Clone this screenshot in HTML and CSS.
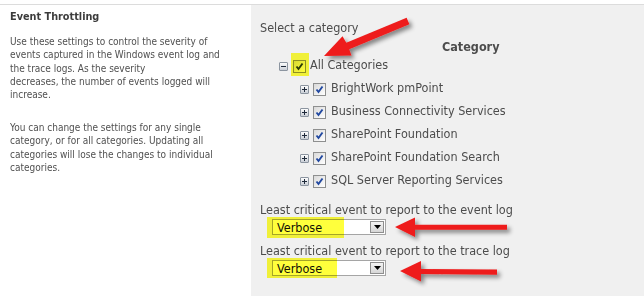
FILE: index.html
```html
<!DOCTYPE html>
<html lang="en">
<head>
  <meta charset="UTF-8" />
  <meta name="viewport" content="width=device-width, initial-scale=1.0" />
  <title>Event Throttling</title>
  <link rel="stylesheet" href="styles.css">
</head>
<body>
  <div class="settings">
    <div class="desc">
      <h3>Event Throttling</h3>
      <p>Use these settings to control the severity of events captured in the Windows event log and the trace logs. As the severity<br>decreases, the number of events logged will increase.</p>
      <p>You can change the settings for any single category, or for all categories. Updating all categories will lose the changes to individual categories.</p>
    </div>

    <div class="form">
      <div class="label">Select a category</div>
      <div class="tree-head">Category</div>

      <div class="row root">
        <span class="toggle minus"></span>
        <span class="cb-wrap">
          <span class="cb"><svg viewBox="0 0 11 11"><polyline points="2.5,5.5 4.5,8 8.5,2.5" /></svg></span>
          <span class="hl hl-cb"></span>
        </span>
        <span class="name">All Categories</span>
      </div>
      <div class="row child">
        <span class="toggle plus"></span>
        <span class="cb"><svg viewBox="0 0 11 11"><polyline points="2.5,5.5 4.5,8 8.5,2.5" /></svg></span>
        <span class="name">BrightWork pmPoint</span>
      </div>
      <div class="row child">
        <span class="toggle plus"></span>
        <span class="cb"><svg viewBox="0 0 11 11"><polyline points="2.5,5.5 4.5,8 8.5,2.5" /></svg></span>
        <span class="name">Business Connectivity Services</span>
      </div>
      <div class="row child">
        <span class="toggle plus"></span>
        <span class="cb"><svg viewBox="0 0 11 11"><polyline points="2.5,5.5 4.5,8 8.5,2.5" /></svg></span>
        <span class="name">SharePoint Foundation</span>
      </div>
      <div class="row child">
        <span class="toggle plus"></span>
        <span class="cb"><svg viewBox="0 0 11 11"><polyline points="2.5,5.5 4.5,8 8.5,2.5" /></svg></span>
        <span class="name">SharePoint Foundation Search</span>
      </div>
      <div class="row child">
        <span class="toggle plus"></span>
        <span class="cb"><svg viewBox="0 0 11 11"><polyline points="2.5,5.5 4.5,8 8.5,2.5" /></svg></span>
        <span class="name">SQL Server Reporting Services</span>
      </div>

      <div class="label field-label">Least critical event to report to the event log</div>
      <div class="select">
        <span class="value">Verbose</span>
        <span class="drop"><svg viewBox="0 0 7 4"><polygon points="0,0 7,0 3.5,4" /></svg></span>
        <span class="hl hl-sel1"></span>
      </div>

      <div class="label field-label second">Least critical event to report to the trace log</div>
      <div class="select">
        <span class="value">Verbose</span>
        <span class="drop"><svg viewBox="0 0 7 4"><polygon points="0,0 7,0 3.5,4" /></svg></span>
        <span class="hl hl-sel2"></span>
      </div>
    </div>
  </div>

  <!-- callout arrows drawn over the form -->
  <svg class="arrows" width="644" height="296" viewBox="0 0 644 296">
    <defs>
      <filter id="shadow" x="-20%" y="-50%" width="140%" height="200%">
        <feDropShadow dx="3" dy="3" stdDeviation="2" flood-color="#000" flood-opacity="0.45" />
      </filter>
    </defs>
    <g fill="#ee1b1b" filter="url(#shadow)">
      <polygon points="324,56 351.5,55.5 349.2,49.2 409.4,24.2 406.6,17.8 346.3,42.8 342.5,36.3" />
      <polygon points="395,227 415,217.5 415,224.8 507,224.8 507,229.8 415,229.8 415,237" />
      <polygon points="400,271 421,261 421,269 497,269.5 497,274.8 421,274 421,281.5" />
    </g>
  </svg>
</body>
</html>
```

FILE: styles.css
```css
body {
  margin: 0;
  padding-top: 4px;
  background: #fff;
  font-family: "DejaVu Sans Condensed", "DejaVu Sans", sans-serif;
  color: #4c4c4c;
}
.settings {
  display: flex;
  border-top: 1px solid #dcdcdc;
  min-height: 291px;
}
.desc {
  width: 215px;
  padding: 5px 26px 0 10px;
  font-size: 10px;
  line-height: 13.3px;
  color: #505050;
}
.desc h3 {
  margin: 0 0 11px;
  font-size: 10.8px;
  line-height: 14px;
  color: #3c3c3c;
}
.desc p {
  margin: 0 0 19.5px;
}
.form {
  flex: 1;
  background: #f0f0f0;
  padding: 15px 9px 0;
  font-size: 12.5px;
  line-height: 15px;
}
.tree-head {
  margin: 4px 0 0 182px;
  font-weight: bold;
}
.row {
  display: flex;
  align-items: center;
  height: 23px;
}
.root {
  padding-left: 19px;
}
.child {
  padding-left: 40px;
}
.name {
  padding-bottom: 3px;
}
.toggle {
  position: relative;
  width: 7px;
  height: 7px;
  margin-top: 2px;
  border: 1px solid #8c95a0;
  border-radius: 1px;
  background: linear-gradient(#fdfdfd, #c9ced6);
}
.toggle::before,
.plus::after {
  content: "";
  position: absolute;
  background: #1f2a3a;
}
.toggle::before {
  left: 1px;
  top: 3px;
  width: 5px;
  height: 1px;
}
.plus::after {
  left: 3px;
  top: 1px;
  width: 1px;
  height: 5px;
}
.root .toggle {
  margin-right: 5px;
}
.child .toggle {
  margin-right: 4px;
}
.cb-wrap {
  position: relative;
  display: flex;
  margin: 2px 4px 0 0;
}
.cb {
  width: 11px;
  height: 11px;
  border: 1px solid #8e8f8f;
  background: linear-gradient(135deg, #d9d9d9, #ffffff);
  display: flex;
}
.child .cb {
  margin: 2px 5px 0 0;
}
.cb svg {
  width: 11px;
  height: 11px;
}
.cb polyline {
  fill: none;
  stroke: #2148a0;
  stroke-width: 1.9;
}
.root .cb polyline {
  stroke: #2b3b10;
}
.hl {
  position: absolute;
  background: #ffff3c;
  mix-blend-mode: multiply;
}
.hl-cb {
  left: -2px;
  top: -7px;
  width: 18px;
  height: 23px;
}
.field-label {
  margin-top: 10px;
}
.field-label.second {
  margin-top: 8px;
}
.select {
  position: relative;
  display: flex;
  align-items: center;
  justify-content: space-between;
  width: 112px;
  height: 14px;
  margin: 2px 0 0 12px;
  border: 1px solid #a5a5a5;
  background: #fff;
  color: #111;
}
.value {
  padding-left: 4px;
}
.drop {
  display: flex;
  align-items: center;
  justify-content: center;
  width: 14px;
  height: 12px;
  margin-right: 1px;
  border: 1px solid #8e8e8e;
  box-sizing: border-box;
  background: linear-gradient(#f4f4f4, #d6d6d6);
}
.drop svg {
  width: 7px;
  height: 4px;
}
.hl-sel1 {
  left: -6px;
  top: -3px;
  width: 77px;
  height: 21px;
}
.hl-sel2 {
  left: -6px;
  top: -3px;
  width: 70px;
  height: 20px;
}
.arrows {
  position: absolute;
  top: 0;
  left: 0;
  pointer-events: none;
}
```
